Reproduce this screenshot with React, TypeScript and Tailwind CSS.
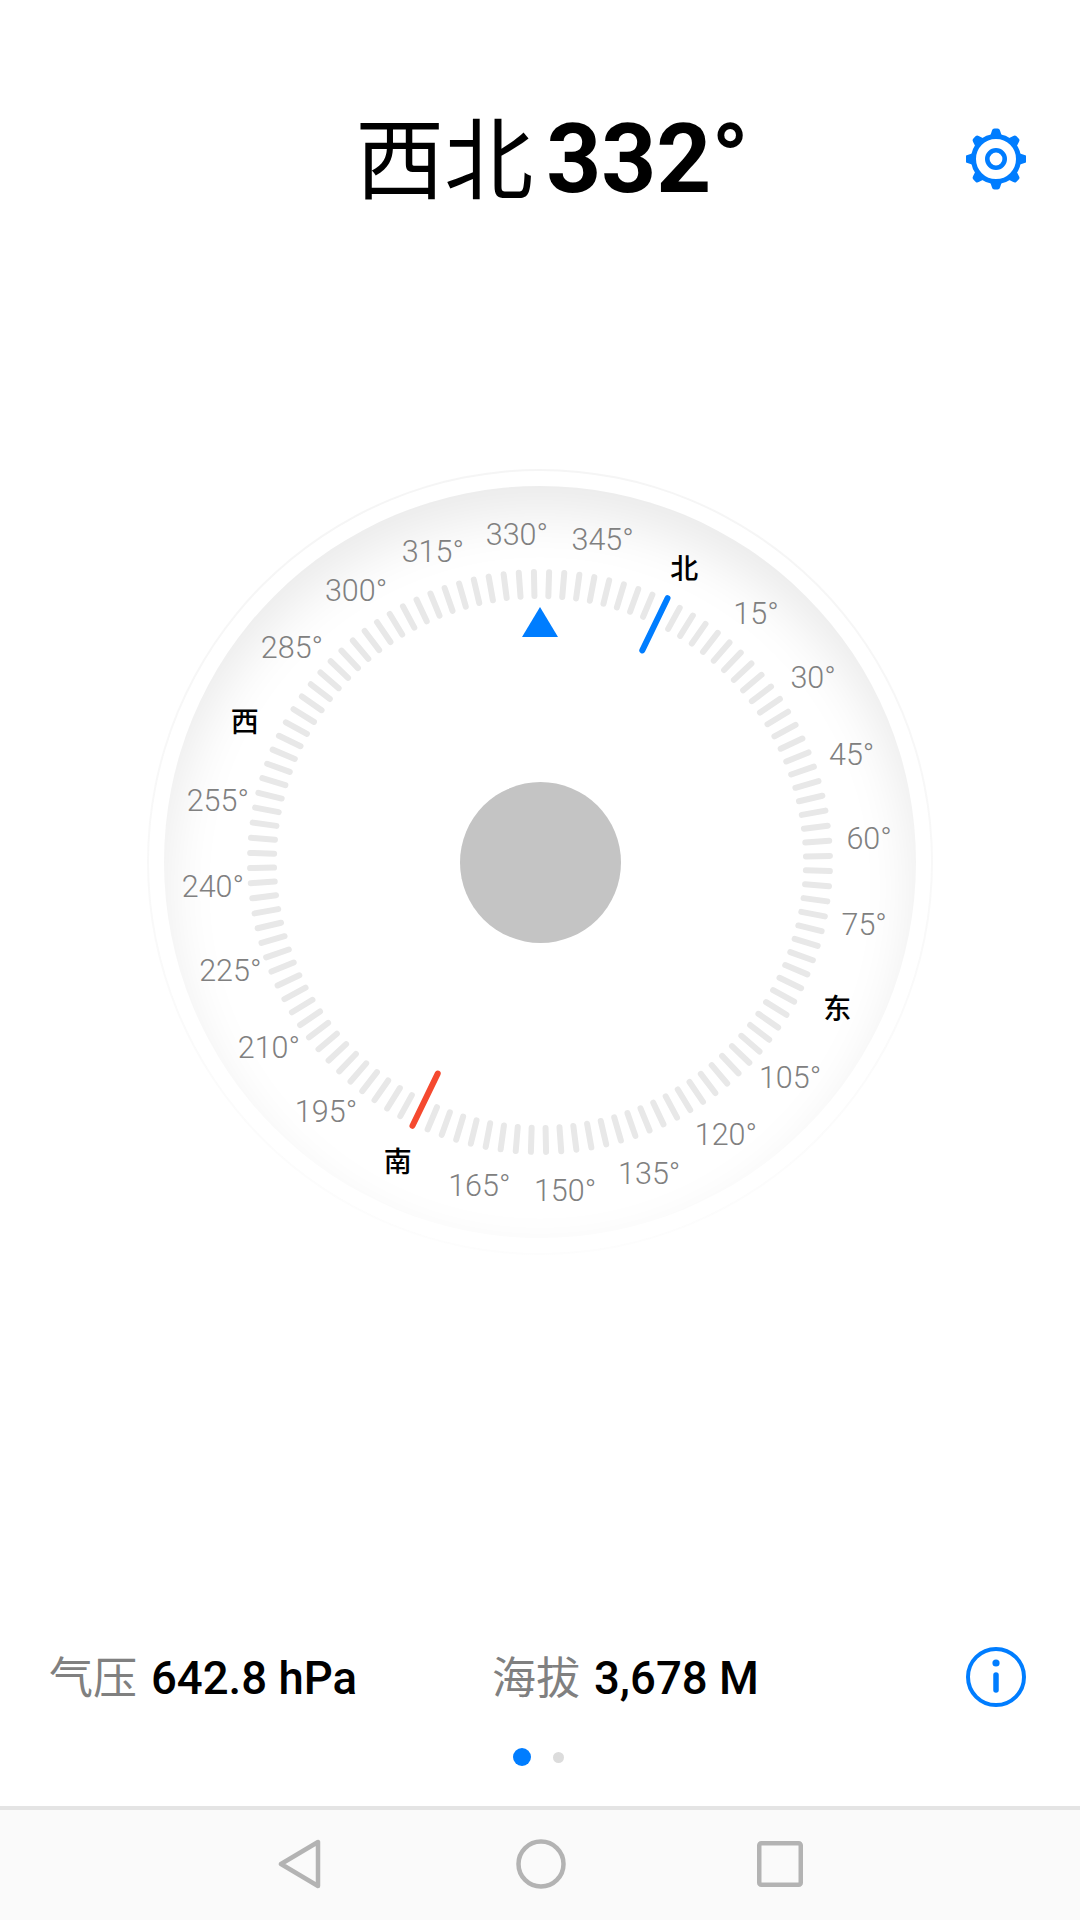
import React from "react";

const ROT = 25.8;
const C = 393;

function polar(deg: number, r: number) {
  const a = ((deg + ROT) * Math.PI) / 180;
  return { x: C + r * Math.sin(a), y: C - r * Math.cos(a) };
}

const degreeLabels = [15, 30, 45, 60, 75, 105, 120, 135, 150, 165, 195, 210, 225, 240, 255, 285, 300, 315, 330, 345];
const cardinals: [string, number][] = [["北", 0], ["东", 90], ["南", 180], ["西", 270]];

function Needle({ deg, color }: { deg: number; color: string }) {
  const a = polar(deg, 293);
  const b = polar(deg, 235);
  return <line x1={a.x} y1={a.y} x2={b.x} y2={b.y} stroke={color} strokeWidth={6} strokeLinecap="round" />;
}

function Ticks() {
  const ticks: React.ReactNode[] = [];
  for (let i = 0; i < 120; i++) {
    const d = i * 3;
    if (d === 0 || d === 180) continue;
    const a = polar(d, 290);
    const b = polar(d, 266);
    ticks.push(<line key={d} x1={a.x} y1={a.y} x2={b.x} y2={b.y} stroke="#e8e8e8" strokeWidth={6} strokeLinecap="round" />);
  }
  return (
    <svg width={786} height={786} viewBox="0 0 786 786" className="absolute inset-0">
      {ticks}
      <Needle deg={0} color="#007dff" />
      <Needle deg={180} color="#f5492f" />
      <polygon points="393,138 411,168 375,168" fill="#007dff" />
    </svg>
  );
}

function Dial() {
  return (
    <div className="relative w-[786px] h-[786px] rounded-full p-[2px] bg-gradient-to-b from-[#f5f5f5] via-[#f8f8f8] via-50% to-[#fdfdfd] flex items-center justify-center">
      <div className="w-full h-full rounded-full bg-white flex items-center justify-center">
        <div className="w-[752px] h-[752px] rounded-full bg-white shadow-[inset_0_26px_54px_rgba(0,0,0,0.085)] flex items-center justify-center">
          <div className="w-[161px] h-[161px] rounded-full bg-[#c4c4c4]" />
        </div>
      </div>
      <Ticks />
      {degreeLabels.map((d) => {
        const p = polar(d, 329);
        return (
          <span
            key={d}
            className="absolute -translate-x-1/2 -translate-y-1/2 text-[30.5px] leading-none font-light text-[#808080] whitespace-nowrap"
            style={{ left: p.x + 1, top: p.y + 1 }}
          >
            {d}°
          </span>
        );
      })}
      {cardinals.map(([t, d]) => {
        const p = polar(d, 329);
        return (
          <span
            key={t}
            className="absolute -translate-x-1/2 -translate-y-1/2 text-[28px] leading-none font-medium text-black"
            style={{ left: p.x + 1, top: p.y + 4.5 }}
          >
            {t}
          </span>
        );
      })}
    </div>
  );
}

function Gear() {
  const teeth = Array.from({ length: 8 }, (_, i) => i * 45);
  return (
    <svg width={60} height={62} viewBox="-30 -31 60 62">
      {teeth.map((t) => (
        <path key={t} d="M-6.5 -21 L-4 -28.5 Q-3.6 -30.5 -1.5 -30.5 H1.5 Q3.6 -30.5 4 -28.5 L6.5 -21 Z" fill="#007dff" transform={`rotate(${t})`} />
      ))}
      <circle r={22.5} fill="none" stroke="#007dff" strokeWidth={5} />
      <circle r={8.7} fill="none" stroke="#007dff" strokeWidth={4.6} />
    </svg>
  );
}

function Info() {
  return (
    <svg width={60} height={60} viewBox="0 0 60 60">
      <circle cx={30} cy={30} r={28} fill="none" stroke="#007dff" strokeWidth={4} />
      <circle cx={30} cy={16} r={3.6} fill="#007dff" />
      <line x1={30} y1={28} x2={30} y2={43} stroke="#007dff" strokeWidth={5.5} strokeLinecap="round" />
    </svg>
  );
}

export default function App() {
  return (
    <div className="w-[1080px] h-[1920px] bg-white flex flex-col overflow-hidden font-['Roboto','Noto_Sans_CJK_SC',sans-serif]">
      <header className="relative h-[316px] flex items-center justify-center shrink-0">
        <h1 className="flex items-baseline leading-none text-black pl-[24px]">
          <span className="text-[89px] font-normal font-['Noto_Sans_CJK_SC',sans-serif]">西北</span>
          <span className="text-[96px] font-bold ml-[13px]">332°</span>
        </h1>
        <div className="absolute left-[966px] top-[128px] flex">
          <Gear />
        </div>
      </header>
      <div className="mt-[153px] flex justify-center shrink-0">
        <Dial />
      </div>
      <div className="flex-1" />
      <div className="relative h-[60px] shrink-0 flex items-center pl-[49px] text-[44px] leading-none mb-[41px]">
        <div className="w-[443px] flex items-baseline gap-[14px]">
          <span className="font-['Noto_Sans_CJK_SC',sans-serif] text-[#808080]">气压</span>
          <span className="font-medium text-black text-[45.5px]">642.8 hPa</span>
        </div>
        <div className="flex items-baseline gap-[14px]">
          <span className="font-['Noto_Sans_CJK_SC',sans-serif] text-[#808080]">海拔</span>
          <span className="font-medium text-black text-[45.5px]">3,678 M</span>
        </div>
        <div className="absolute left-[966px] top-0 flex">
          <Info />
        </div>
      </div>
      <div className="h-[18px] shrink-0 flex items-center justify-center gap-[22px] pr-[3px] mb-[40px]">
        <div className="w-[18px] h-[18px] rounded-full bg-[#007dff]" />
        <div className="w-[11px] h-[11px] rounded-full bg-[#dcdcdc]" />
      </div>
      <nav className="h-[114px] shrink-0 border-t-4 border-[#e4e4e4] bg-[#fafafa] flex items-center justify-center">
        <div className="flex items-center -mt-[2px]">
          <svg width={44} height={50} viewBox="0 0 44 50">
            <path d="M40 3 V47 L3 25 Z" fill="none" stroke="#b3b3b3" strokeWidth={4.5} strokeLinejoin="round" />
          </svg>
          <svg width={50} height={50} viewBox="0 0 50 50" className="ml-[194px]">
            <circle cx={25} cy={25} r={22.5} fill="none" stroke="#b3b3b3" strokeWidth={4.5} />
          </svg>
          <svg width={46} height={46} viewBox="0 0 46 46" className="ml-[191px]">
            <rect x={2.25} y={2.25} width={41.5} height={41.5} rx={2} fill="none" stroke="#b3b3b3" strokeWidth={4.5} />
          </svg>
        </div>
      </nav>
    </div>
  );
}
